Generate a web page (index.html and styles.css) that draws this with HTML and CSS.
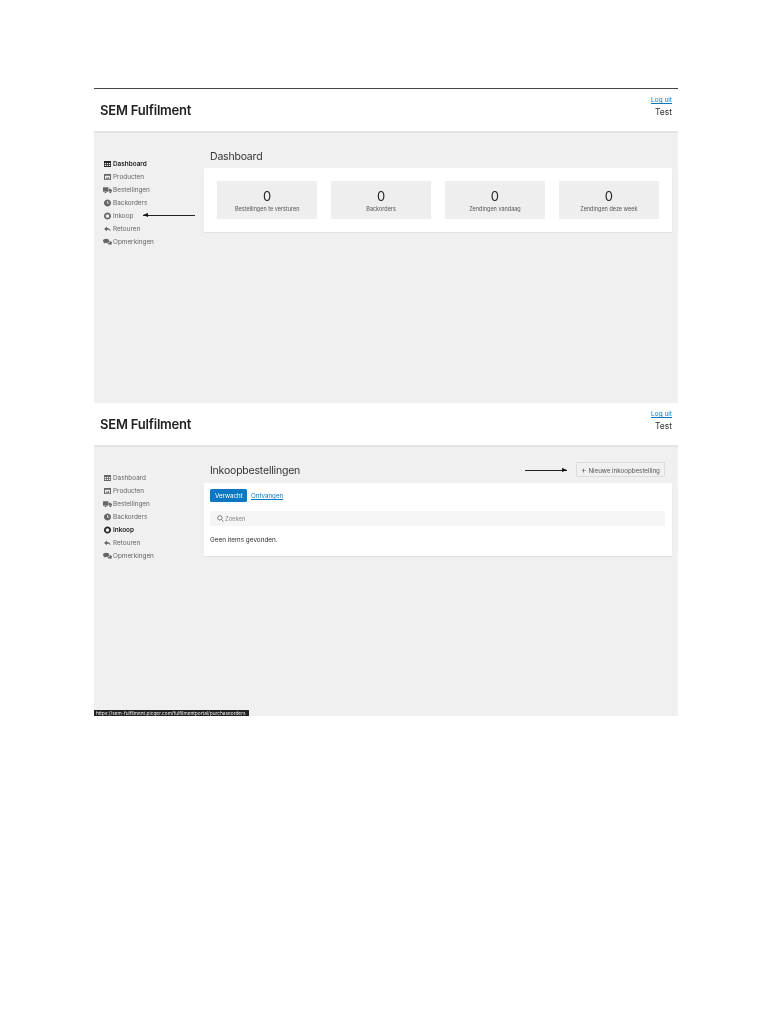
FILE: index.html
```html
<!DOCTYPE html>
<html lang="nl">
<head>
  <meta charset="UTF-8" />
  <meta name="viewport" content="width=device-width, initial-scale=1.0"/>
  <title>SEM Fulfilment</title>
  <link rel="stylesheet" href="styles.css">
</head>
<body>

  <svg class="icon-defs" width="0" height="0">
    <symbol id="i-table" viewBox="0 0 16 16">
      <path d="M1 2h14v12H1z M2.500 6v2.200h3V6z M7 6v2.200h2.500V6z M11 6v2.200h2.500V6z M2.500 9.700v2.500h3V9.700z M7 9.700v2.500h2.500V9.700z M11 9.700v2.500h2.500V9.700z" fill-rule="evenodd"/>
    </symbol>
    <symbol id="i-image" viewBox="0 0 16 16">
      <path d="M1 2h14v12H1z M3 5.500v7h10v-7z M4 11.500l2.500-3 1.500 1.500 2-2.500 2 4z" fill-rule="evenodd"/>
    </symbol>
    <symbol id="i-truck" viewBox="0 0 20 16">
      <path d="M0 2h12v10H7.800a2.500 2.500 0 0 0-4.600 0H0z M13 5h3.500L20 8.500V12h-1.200a2.500 2.500 0 0 0-4.600 0H13z"/>
      <circle cx="5.500" cy="13" r="2"/><circle cx="16.500" cy="13" r="2"/>
    </symbol>
    <symbol id="i-clock" viewBox="0 0 16 16">
      <path d="M8 1a7 7 0 1 0 .01 0z M7.200 4v5h4.300V7.500H8.800V4z" fill-rule="evenodd"/>
    </symbol>
    <symbol id="i-ring" viewBox="0 0 16 16">
      <path d="M8 1a7 7 0 1 0 .01 0z M8 4.500a3.500 3.500 0 1 1-.01 0z" fill-rule="evenodd"/>
    </symbol>
    <symbol id="i-reply" viewBox="0 0 16 16">
      <path d="M7 3L1 7.800l6 4.700V9.600c3.500 0 5.500.8 7 3.400 0-4-2.500-6.600-7-6.800z"/>
    </symbol>
    <symbol id="i-comments" viewBox="0 0 20 16">
      <path d="M7 1c3.800 0 7 2.100 7 4.700s-3.200 4.700-7 4.700c-.8 0-1.500-.1-2.200-.3L1.500 12l1-2.800C1 8.400 0 7.100 0 5.700 0 3.100 3.200 1 7 1z"/>
      <path d="M15 5.500c2.800.4 5 2 5 4.200 0 1.200-.7 2.200-1.800 3l.8 2.300-3-1.500c-2.600.4-5.400-.4-6.500-2.300 3.500-.2 6-2.600 5.500-5.700z"/>
    </symbol>
  </svg>

  <section class="portal portal-first">
    <header class="topbar">
      <div class="brand">SEM Fulfilment</div>
      <div class="user-box">
        <a class="logout" href="#">Log uit</a>
        <div class="user-name">Test</div>
      </div>
    </header>
    <div class="main">
      <nav class="sidebar">
        <a class="nav-item active" href="#"><svg class="nav-icon"><use href="#i-table"/></svg>Dashboard</a>
        <a class="nav-item" href="#"><svg class="nav-icon"><use href="#i-image"/></svg>Producten</a>
        <a class="nav-item" href="#"><svg class="nav-icon"><use href="#i-truck"/></svg>Bestellingen</a>
        <a class="nav-item" href="#"><svg class="nav-icon"><use href="#i-clock"/></svg>Backorders</a>
        <a class="nav-item" href="#"><svg class="nav-icon"><use href="#i-ring"/></svg>Inkoop</a>
        <a class="nav-item" href="#"><svg class="nav-icon"><use href="#i-reply"/></svg>Retouren</a>
        <a class="nav-item" href="#"><svg class="nav-icon"><use href="#i-comments"/></svg>Opmerkingen</a>
      </nav>
      <div class="content">
        <div class="page-head">
          <h1>Dashboard</h1>
        </div>
        <div class="card stats">
          <div class="stat"><strong>0</strong><span>Bestellingen te versturen</span></div>
          <div class="stat"><strong>0</strong><span>Backorders</span></div>
          <div class="stat"><strong>0</strong><span>Zendingen vandaag</span></div>
          <div class="stat"><strong>0</strong><span>Zendingen deze week</span></div>
        </div>
      </div>
      <div class="arrow arrow-left"></div>
    </div>
  </section>

  <section class="portal portal-second">
    <header class="topbar">
      <div class="brand">SEM Fulfilment</div>
      <div class="user-box">
        <a class="logout" href="#">Log uit</a>
        <div class="user-name">Test</div>
      </div>
    </header>
    <div class="main">
      <nav class="sidebar">
        <a class="nav-item" href="#"><svg class="nav-icon"><use href="#i-table"/></svg>Dashboard</a>
        <a class="nav-item" href="#"><svg class="nav-icon"><use href="#i-image"/></svg>Producten</a>
        <a class="nav-item" href="#"><svg class="nav-icon"><use href="#i-truck"/></svg>Bestellingen</a>
        <a class="nav-item" href="#"><svg class="nav-icon"><use href="#i-clock"/></svg>Backorders</a>
        <a class="nav-item active" href="#"><svg class="nav-icon"><use href="#i-ring"/></svg>Inkoop</a>
        <a class="nav-item" href="#"><svg class="nav-icon"><use href="#i-reply"/></svg>Retouren</a>
        <a class="nav-item" href="#"><svg class="nav-icon"><use href="#i-comments"/></svg>Opmerkingen</a>
      </nav>
      <div class="content">
        <div class="page-head">
          <h1>Inkoopbestellingen</h1>
          <button class="btn-new" type="button"><span class="plus">+</span>Nieuwe inkoopbestelling</button>
        </div>
        <div class="card orders">
          <div class="tabs">
            <a class="tab-active" href="#">Verwacht</a>
            <a class="tab-link" href="#">Ontvangen</a>
          </div>
          <div class="search">
            <svg class="search-icon" viewBox="0 0 16 16"><circle cx="6.500" cy="6.500" r="5"/><path d="M10.200 10.200L15 15"/></svg>
            Zoeken
          </div>
          <p class="empty">Geen items gevonden.</p>
        </div>
      </div>
      <div class="arrow arrow-right"></div>
      <div class="status-url">https://sem-fulfilment.picqer.com/fulfilmentportal/purchaseorders</div>
    </div>
  </section>

</body>
</html>
```

FILE: styles.css
```css
body {
  background: #ffffff;
  font-family: 'Inter', 'Liberation Sans', sans-serif;
  margin: 0;
  padding: 88px 0 0 94px;
  color: #333;
}

a {
  text-decoration: none;
}

.icon-defs {
  position: absolute;
}

/* the reference is a scaled-down screenshot, so everything is a little soft */
.portal {
  width: 584px;
  filter: blur(0.3px);
}

.portal-first {
  border-top: 1px solid #444;
}

.topbar {
  height: 42px;
  background: #ffffff;
  border-bottom: 2px solid #e4e4e4;
  display: flex;
  justify-content: space-between;
  align-items: center;
  padding: 0 6px;
}

.brand {
  font-size: 13px;
  font-weight: 600;
  color: #222;
  letter-spacing: -0.2px;
}

.user-box {
  text-align: right;
  align-self: flex-start;
  padding-top: 7px;
}

.logout {
  display: block;
  font-size: 6.5px;
  line-height: 8px;
  color: #0a78c2;
  text-decoration: underline;
  margin-bottom: 3px;
}

.user-name {
  font-size: 8.5px;
  line-height: 11px;
  color: #333;
}

.main {
  position: relative;
  display: flex;
  height: 270px;
  background: #f0f0f0;
}

.portal-second .main {
  height: 269px;
}

.sidebar {
  width: 110px;
  flex-shrink: 0;
  padding: 24px 0 0 9px;
  box-sizing: border-box;
}

.nav-item {
  display: flex;
  align-items: center;
  height: 13px;
  font-size: 6.4px;
  color: #666;
}

.nav-item.active {
  color: #222;
  font-weight: 600;
}

.nav-icon {
  width: 9px;
  height: 8px;
  margin-right: 1px;
  fill: currentColor;
}

.content {
  width: 468px;
  padding-top: 15px;
}

.page-head {
  display: flex;
  justify-content: space-between;
  align-items: center;
  height: 15px;
  padding: 0 7px 0 6px;
  margin-bottom: 5px;
}

.portal-second .page-head {
  margin-bottom: 6px;
}

h1 {
  margin: 1px 0 0;
  font-size: 10.500px;
  font-weight: 400;
  letter-spacing: -0.2px;
  color: #333;
}

.card {
  background: #ffffff;
  box-shadow: 0 1px 1px rgba(0, 0, 0, 0.05);
}

.stats {
  display: grid;
  grid-template-columns: repeat(4, 1fr);
  gap: 13.500px;
  padding: 13px;
}

.stat {
  height: 38px;
  background: #eeeeee;
  display: flex;
  flex-direction: column;
  align-items: center;
  justify-content: center;
}

.stat strong {
  font-size: 13px;
  line-height: 16px;
  font-weight: 400;
  color: #222;
  margin-bottom: 1px;
}

.stat span {
  font-size: 5.500px;
  line-height: 8px;
  color: #555;
}

.btn-new {
  height: 15px;
  width: 89px;
  padding: 0;
  border: 1px solid #dcdcdc;
  border-radius: 1px;
  background: #f0f0f0;
  color: #555;
  font-family: inherit;
  font-size: 6.2px;
  white-space: nowrap;
}

.plus {
  font-size: 8px;
  margin-right: 2px;
}

.orders {
  height: 73px;
  padding: 6px 7px 0 6px;
  box-sizing: border-box;
}

.tabs {
  display: flex;
  align-items: center;
  gap: 4px;
  height: 13px;
  font-size: 6.2px;
}

.tab-active {
  background: #0a78c2;
  color: #ffffff;
  line-height: 13px;
  padding: 0 5px;
  width: 37px;
  box-sizing: border-box;
  text-align: center;
  border-radius: 1.500px;
}

.tab-link {
  color: #0a78c2;
  text-decoration: underline;
}

.search {
  display: flex;
  align-items: center;
  height: 15px;
  margin-top: 9px;
  padding-left: 7px;
  background: #f5f5f5;
  font-size: 5.8px;
  color: #888;
}

.search-icon {
  width: 7px;
  height: 7px;
  margin-right: 1px;
  fill: none;
  stroke: #555;
  stroke-width: 1.600;
}

.empty {
  margin: 10px 0 0;
  font-size: 6.4px;
  line-height: 8px;
  color: #333;
}

/* annotation arrows lying over the screenshots */
.arrow {
  position: absolute;
  height: 1px;
  background: #222;
}

.arrow::after {
  content: "";
  position: absolute;
  top: -2px;
  border-top: 2.500px solid transparent;
  border-bottom: 2.500px solid transparent;
}

.arrow-left {
  left: 49px;
  top: 82px;
  width: 52px;
}

.arrow-left::after {
  left: 0;
  border-right: 5px solid #111;
}

.arrow-right {
  left: 431px;
  top: 23px;
  width: 42px;
}

.arrow-right::after {
  right: 0;
  border-left: 5px solid #111;
}

.status-url {
  position: absolute;
  left: 0;
  bottom: 0;
  width: 155px;
  height: 6px;
  box-sizing: border-box;
  padding-left: 2px;
  background: #222;
  color: #eee;
  font-size: 4.800px;
  line-height: 6px;
  white-space: nowrap;
  overflow: hidden;
}
```
